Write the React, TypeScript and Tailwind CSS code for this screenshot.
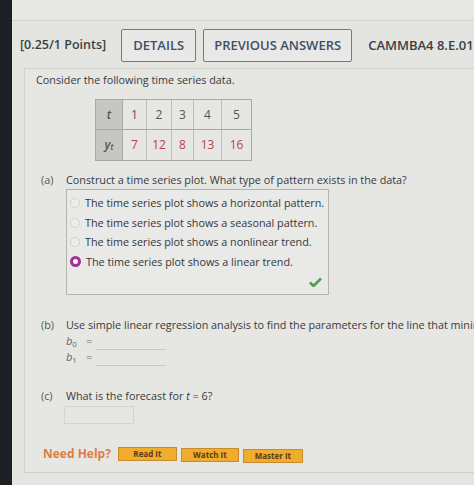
import React from "react";

const font = { fontFamily: '"Open Sans", "Liberation Sans", sans-serif' };

function Radio({ selected }: { selected?: boolean }) {
  if (selected)
    return (
      <span className="inline-block w-[11px] h-[11px] rounded-full border-[3px] border-[#a1309a] bg-white shrink-0" />
    );
  return (
    <span className="inline-block w-[10px] h-[10px] rounded-full border border-[#cfd3d3] bg-[#ececea] shrink-0" />
  );
}

export default function App() {
  const ts = [1, 2, 3, 4, 5];
  const ys = [7, 12, 8, 13, 16];
  const widths = ["w-[24px]", "w-[25px]", "w-[22px]", "w-[28px]", "w-[29px]"];
  const options = [
    "The time series plot shows a horizontal pattern.",
    "The time series plot shows a seasonal pattern.",
    "The time series plot shows a nonlinear trend.",
    "The time series plot shows a linear trend.",
  ];
  return (
    <div
      className="w-[474px] h-[485px] bg-[#e4e4e1] flex overflow-hidden text-[#373b40]"
      style={font}
    >
      <div className="w-[12px] shrink-0 bg-[#1c1f25]" />
      <div className="flex-1 flex flex-col min-w-0">
        <div className="h-[21px] shrink-0 border-b border-[#d3d3d0] bg-[#e7e7e4]" />
        <div className="h-[47px] shrink-0 flex items-center whitespace-nowrap pt-[2px]">
          <span className="ml-[8px] text-[12.5px] font-semibold text-[#3b3f44]">
            [0.25/1 Points]
          </span>
          <span className="ml-[15px] h-[33px] w-[75px] flex items-center justify-center border-[1.5px] border-[#6f7b88] rounded-[2px] text-[13px] text-[#3e5066] font-semibold bg-[#e8e8e6]">
            DETAILS
          </span>
          <span className="ml-[7px] h-[33px] w-[149px] flex items-center justify-center border-[1.5px] border-[#6f7b88] rounded-[2px] text-[13px] text-[#3e5066] font-semibold bg-[#e8e8e6]">
            PREVIOUS ANSWERS
          </span>
          <span className="ml-[16px] text-[13px] font-semibold text-[#3b3f44]">
            CAMMBA4 8.E.01
          </span>
        </div>
        <div className="ml-[12px] h-[405px] shrink-0 border-l border-t border-b border-[#cfcfcc] bg-[#e6e6e3] flex flex-col text-[10.8px]">
          <div className="pl-[11px] pt-[3px]">
            Consider the following time series data.
          </div>
          <div className="ml-[70px] mt-[11px] flex flex-col border border-[#a9aaa8] w-fit">
            <div className="flex h-[30px] border-b border-[#a9aaa8]">
              <div className="w-[27px] bg-[#c6c6c2] border-r border-[#a9aaa8] flex items-center justify-center italic font-semibold text-[12px] text-[#555]">
                t
              </div>
              {ts.map((t, i) => (
                <div
                  key={t}
                  className={`${widths[i]} border-r border-[#bdbdba] last:border-r-0 flex items-center justify-center text-[12px] text-[#555]`}
                >
                  {t}
                </div>
              ))}
            </div>
            <div className="flex h-[30px]">
              <div className="w-[27px] bg-[#c6c6c2] border-r border-[#a9aaa8] flex items-center justify-center italic font-semibold text-[12px] text-[#555]">
                y<sub className="text-[8px]">t</sub>
              </div>
              {ys.map((y, i) => (
                <div
                  key={i}
                  className={`${widths[i]} border-r border-[#bdbdba] last:border-r-0 flex items-center justify-center text-[12px] text-[#c0404f]`}
                >
                  {y}
                </div>
              ))}
            </div>
          </div>
          <div className="mt-[11px] flex pl-[16px] whitespace-nowrap">
            <span className="w-[25px] shrink-0 text-[#555]">(a)</span>
            <span>Construct a time series plot. What type of pattern exists in the data?</span>
          </div>
          <div className="ml-[41px] mt-[1px] w-[263px] h-[106px] border border-[#b4b4b1] bg-[#e9e9e7] flex flex-col pt-[3px] relative">
            {options.map((o, i) => (
              <div key={i} className="flex items-center h-[19.5px] pl-[3px] gap-[5px] whitespace-nowrap">
                <Radio selected={i === 3} />
                <span className="text-[#33373c]">{o}</span>
              </div>
            ))}
            <svg
              className="absolute right-[6px] bottom-[7px]"
              width="13"
              height="10"
              viewBox="0 0 13 10"
            >
              <path d="M1 5.5 L4.5 9 L12 1.5" stroke="#4ea04e" strokeWidth="2.6" fill="none" />
            </svg>
          </div>
          <div className="mt-[22px] flex pl-[16px] whitespace-nowrap">
            <span className="w-[25px] shrink-0 text-[#555]">(b)</span>
            <span>Use simple linear regression analysis to find the parameters for the line that minimiz</span>
          </div>
          <div className="ml-[41px] flex items-end h-[16px] text-[11px] text-[#666]">
            <span className="w-[20px] italic">
              b<sub className="text-[8px] not-italic">0</sub>
            </span>
            <span className="w-[10px]">=</span>
            <span className="w-[70px] h-[10px] border-b border-[#c9c9c6]" />
          </div>
          <div className="ml-[41px] flex items-end h-[16px] text-[11px] text-[#666]">
            <span className="w-[20px] italic">
              b<sub className="text-[8px] not-italic">1</sub>
            </span>
            <span className="w-[10px]">=</span>
            <span className="w-[70px] h-[10px] border-b border-[#c9c9c6]" />
          </div>
          <div className="mt-[22px] flex pl-[16px] whitespace-nowrap">
            <span className="w-[25px] shrink-0 text-[#555]">(c)</span>
            <span>
              What is the forecast for <i>t</i> = 6?
            </span>
          </div>
          <div className="ml-[39px] mt-[2px] w-[70px] h-[18px] border border-[#d4d4d1]" />
          <div className="mt-[21px] flex items-center pl-[18px] whitespace-nowrap">
            <span className="text-[12px] font-bold text-[#e07d3e]">Need Help?</span>
            <span className="ml-[7px] w-[59px] h-[14px] bg-[#f0ac2c] border border-[#c98a2a] flex items-center justify-center text-[8px] font-bold text-[#5a3b10]">
              Read It
            </span>
            <span className="ml-[4px] mt-[2px] w-[58px] h-[14px] bg-[#f0ac2c] border border-[#c98a2a] flex items-center justify-center text-[8px] font-bold text-[#5a3b10]">
              Watch It
            </span>
            <span className="ml-[4px] mt-[4px] w-[60px] h-[14px] bg-[#f0ac2c] border border-[#c98a2a] flex items-center justify-center text-[8px] font-bold text-[#5a3b10]">
              Master It
            </span>
          </div>
        </div>
      </div>
    </div>
  );
}
